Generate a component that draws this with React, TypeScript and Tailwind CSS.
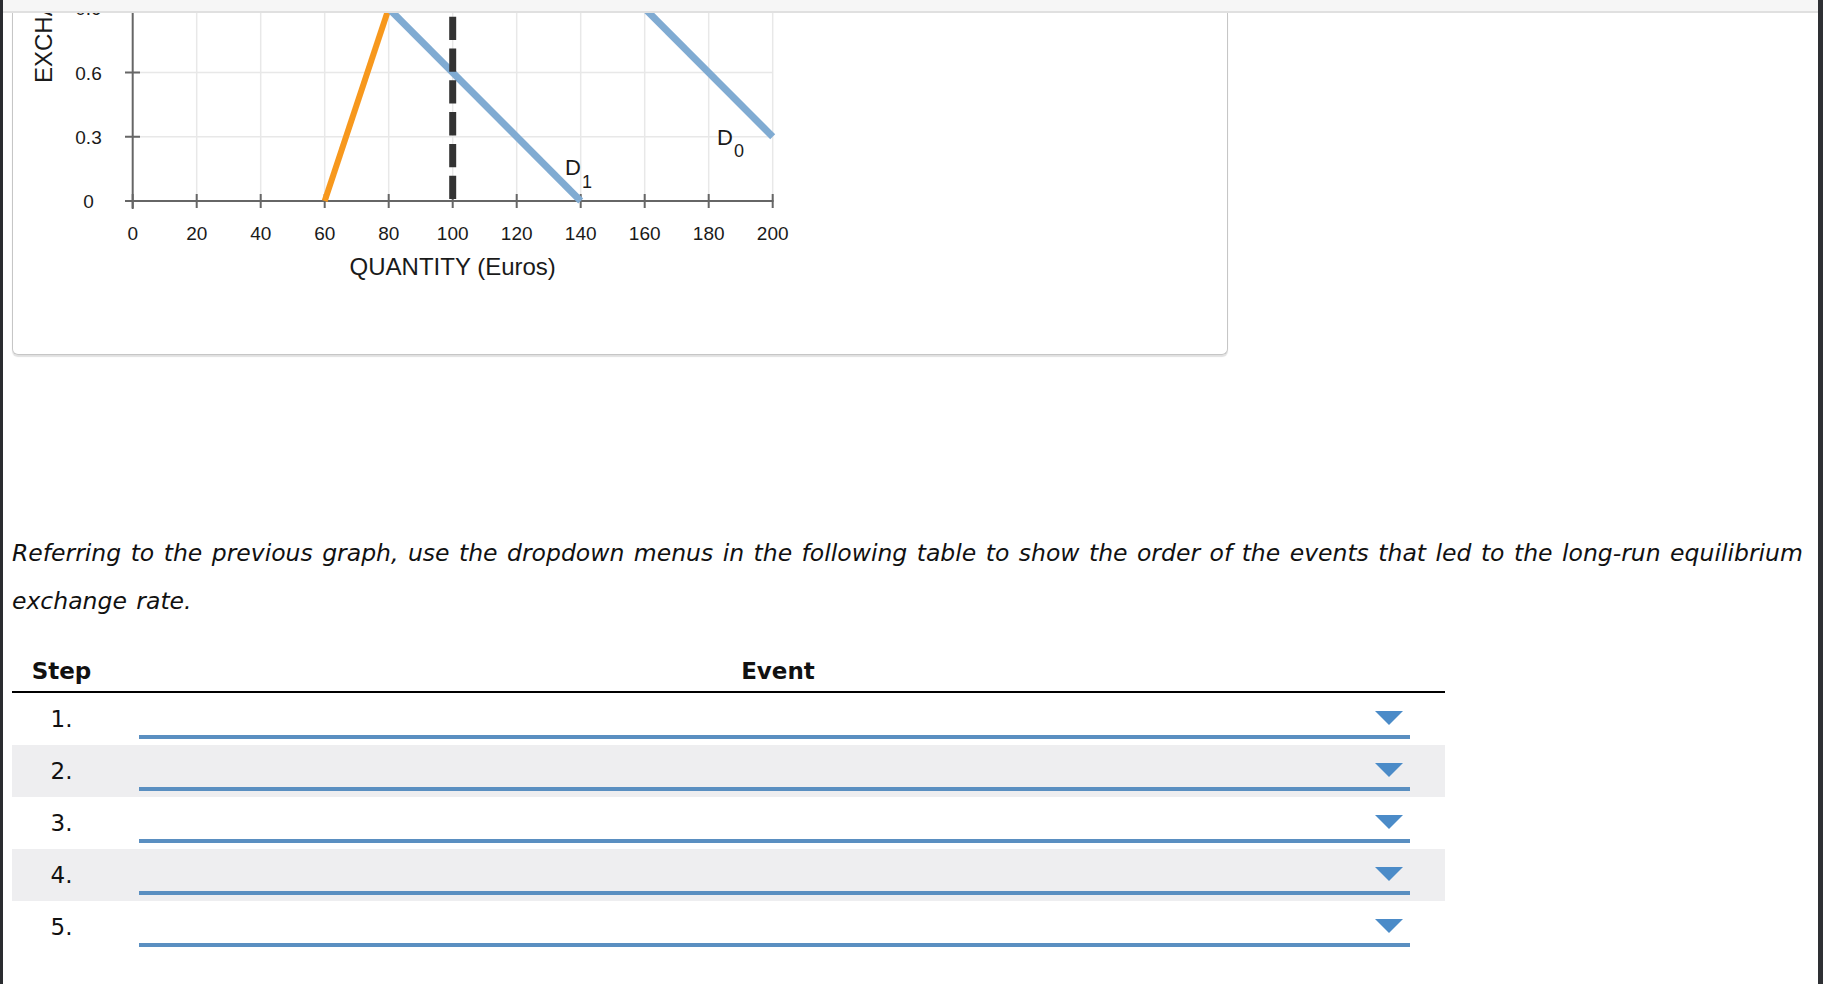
import React from "react";

const X = (q: number) => 132.7 + 3.2 * q;
const Y = (v: number) => 201 - v * 214;

function Chart() {
  const qs = [0, 20, 40, 60, 80, 100, 120, 140, 160, 180, 200];
  const vs = [0, 0.3, 0.6, 0.9];
  return (
    <svg
      width={1214}
      height={341}
      viewBox="13 13 1214 341"
      className="block"
      style={{ fontFamily: '"Liberation Sans", Arial, sans-serif' }}
    >
      {qs.slice(1).map((q) => (
        <line key={"gv" + q} x1={X(q)} x2={X(q)} y1={0} y2={201} stroke="#e8e8e8" strokeWidth={1.5} />
      ))}
      {vs.slice(1).map((v) => (
        <line key={"gh" + v} x1={132.7} x2={772.7} y1={Y(v)} y2={Y(v)} stroke="#e8e8e8" strokeWidth={1.5} />
      ))}
      <line x1={132.7} x2={132.7} y1={0} y2={209} stroke="#666" strokeWidth={2} />
      <line x1={125} x2={773.5} y1={201} y2={201} stroke="#666" strokeWidth={2} />
      {qs.map((q) => (
        <line key={"tx" + q} x1={X(q)} x2={X(q)} y1={194} y2={208} stroke="#666" strokeWidth={2} />
      ))}
      {vs.map((v) => (
        <line key={"ty" + v} x1={125} x2={140} y1={Y(v)} y2={Y(v)} stroke="#666" strokeWidth={2} />
      ))}
      {vs.map((v) => (
        <text key={"ly" + v} x={88.5} y={Y(v) + 7} fontSize={19} textAnchor="middle" fill="#1a1a1a">
          {v === 0 ? "0" : v.toFixed(1)}
        </text>
      ))}
      {qs.map((q) => (
        <text key={"lx" + q} x={X(q)} y={240} fontSize={19} textAnchor="middle" fill="#1a1a1a">
          {q}
        </text>
      ))}
      <text x={452.7} y={275} fontSize={24} textAnchor="middle" fill="#1a1a1a">
        QUANTITY (Euros)
      </text>
      <text transform="translate(51.5,83) rotate(-90)" fontSize={24} fill="#1a1a1a">
        EXCHANGE RATE (Dollars per euro)
      </text>
      <line x1={X(60)} y1={201} x2={X(80)} y2={Y(0.9)} stroke="#f7981d" strokeWidth={6} />
      <line x1={X(80)} y1={Y(0.9)} x2={X(140)} y2={201} stroke="#80abd2" strokeWidth={7} />
      <line x1={X(160)} y1={Y(0.9)} x2={X(200)} y2={Y(0.3)} stroke="#80abd2" strokeWidth={7} />
      <line x1={452.7} x2={452.7} y1={16.7} y2={200} stroke="#333" strokeWidth={7} strokeDasharray="23.3 8.5" />
      <text x={565} y={175} fontSize={22} fill="#1a1a1a">
        D<tspan fontSize={18} dx={1} dy={13}>1</tspan>
      </text>
      <text x={717} y={145} fontSize={22} fill="#1a1a1a">
        D<tspan fontSize={18} dx={1} dy={12}>0</tspan>
      </text>
    </svg>
  );
}

function Triangle() {
  return (
    <svg width={28} height={14} viewBox="0 0 28 14" className="block">
      <polygon points="0,0 28,0 14,14" fill="#4b8bc8" />
    </svg>
  );
}

export default function App() {
  const steps = [1, 2, 3, 4, 5];
  return (
    <div className="w-[1823px] h-[984px] overflow-hidden bg-white flex">
      <div className="w-[3px] h-full bg-[#2a2c30]" />
      <div className="flex-1 flex flex-col min-w-0">
        <div className="h-[13px] bg-[#f6f6f6] border-b-2 border-[#e0e0e0] shrink-0" />
        <div className="ml-[9px] w-[1216px] h-[342px] border-x border-b border-[#c6c6c6] rounded-b-[6px] shadow-[0_2px_1px_rgba(0,0,0,0.12)] overflow-hidden shrink-0">
          <Chart />
        </div>
        <p
          className="mt-[174px] ml-[9px] mr-[4px] text-[23.5px] leading-[48px] italic text-[#111] [word-spacing:2px]"
          style={{ fontFamily: '"DejaVu Sans", Verdana, sans-serif' }}
        >
          Referring to the previous graph, use the dropdown menus in the following table to show the order of the
          events that led to the long-run equilibrium exchange rate.
        </p>
        <div
          className="mt-[25px] ml-[9px] w-[1433px] text-[#111]"
          style={{ fontFamily: '"DejaVu Sans", Verdana, sans-serif' }}
        >
          <div className="flex h-[43px] border-b-2 border-black">
            <div className="w-[99px] flex items-end justify-center pb-[6px] text-[23px] leading-[28px] font-bold">
              Step
            </div>
            <div className="flex-1 flex items-end justify-center pb-[6px] text-[23px] leading-[28px] font-bold">
              Event
            </div>
          </div>
          {steps.map((s) => (
            <div key={s} className={"flex h-[52px] " + (s % 2 === 0 ? "bg-[#eeeef0]" : "bg-white")}>
              <div className="w-[99px] flex items-center justify-center text-[23px] leading-[28px]">{s}.</div>
              <div className="flex-1 pl-[28px] pr-[35px] pt-[18px] pb-[6px]">
                <div className="h-full border-b-4 border-[#5a8fc1] flex justify-end items-start pr-[7px]">
                  <Triangle />
                </div>
              </div>
            </div>
          ))}
        </div>
      </div>
      <div className="w-[5px] h-full bg-[#2e3034]" />
    </div>
  );
}
